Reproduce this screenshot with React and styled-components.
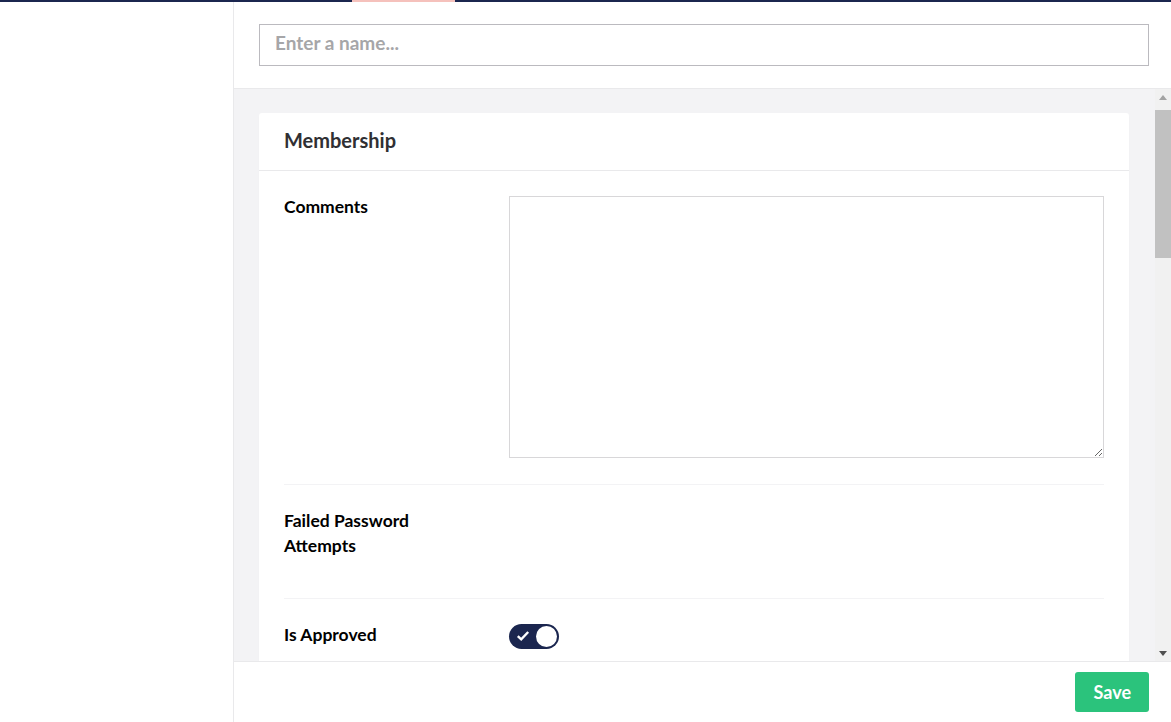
import styled, { createGlobalStyle } from 'styled-components'

const GlobalStyle = createGlobalStyle`
  html, body {
    margin: 0;
    padding: 0;
    height: 100%;
    overflow: hidden;
  }
  body {
    font-family: Lato, "Open Sans", sans-serif;
    color: #000;
    background: #fff;
  }
  * {
    box-sizing: border-box;
  }
`

const Page = styled.div`
  display: flex;
  flex-direction: column;
  height: 100vh;
`

const TopBar = styled.div`
  display: flex;
  height: 2px;
  flex-shrink: 0;
  background: #1b264f;
`

const TabIndicator = styled.div`
  margin-left: 352px;
  width: 103px;
  background: #f5c1bc;
`

const Body = styled.div`
  display: flex;
  flex: 1;
  min-height: 0;
`

const Sidebar = styled.aside`
  width: 234px;
  flex-shrink: 0;
  border-right: 1px solid #e9e9eb;
  background: #fff;
`

const Main = styled.main`
  display: flex;
  flex: 1;
  flex-direction: column;
  min-width: 0;
`

const Header = styled.header`
  flex-shrink: 0;
  padding: 22px 22px 22px 25px;
  border-bottom: 1px solid #e9e9eb;
  background: #fff;
`

const NameInput = styled.input`
  display: block;
  width: 100%;
  height: 42px;
  padding: 0 15px 5px;
  border: 1px solid #bbbabf;
  border-radius: 0;
  font-family: inherit;
  font-size: 19px;
  font-weight: 700;
  color: #1b264f;
  outline: none;
  caret-color: #000;

  &::placeholder {
    color: #a6a6a8;
  }
`

const Content = styled.div`
  display: flex;
  flex: 1;
  min-height: 0;
  background: #f3f3f5;
`

const ScrollArea = styled.div`
  flex: 1;
  min-width: 0;
  overflow: hidden;
  padding: 24px 26px 24px 25px;
`

const ScrollTrack = styled.div`
  display: flex;
  flex-direction: column;
  width: 16px;
  flex-shrink: 0;
  background: #f1f1f1;
`

const ScrollButton = styled.div`
  display: flex;
  align-items: center;
  justify-content: center;
  height: 16px;
  flex-shrink: 0;
  margin-top: ${(p) => (p.$down ? 'auto' : '0')};

  &::before {
    content: '';
    width: 0;
    height: 0;
    border-left: 4.5px solid transparent;
    border-right: 4.5px solid transparent;
    ${(p) =>
      p.$down
        ? 'border-top: 5px solid #505050;'
        : 'border-bottom: 5px solid #a3a3a3;'}
  }
`

const ScrollThumb = styled.div`
  height: 148px;
  margin-top: 5px;
  background: #c1c1c1;
`

const Card = styled.section`
  background: #fff;
  border-radius: 3px;
  box-shadow: 0 1px 1px rgba(0, 0, 0, 0.04);
  margin-bottom: ${(p) => (p.$last ? '0' : '20px')};
`

const CardHeader = styled.div`
  display: flex;
  align-items: center;
  height: 58px;
  padding: 0 25px 3px;
  border-bottom: 1px solid #e9e9eb;
`

const CardTitle = styled.h2`
  margin: 0;
  font-size: 20px;
  font-weight: 700;
  color: #303033;
`

const CardBody = styled.div`
  padding: 0 25px;
`

const Row = styled.div`
  display: grid;
  grid-template-columns: 225px 1fr;
  padding: 25px 0 26px;
  border-bottom: ${(p) => (p.$last ? 'none' : '1px solid #f3f3f5')};
`

const Label = styled.div`
  margin-top: -2px;
  font-size: 17.5px;
  font-weight: 700;
  line-height: 25px;
  color: #000;
`

const Field = styled.div`
  min-height: ${(p) => p.$minHeight || '0'};
  font-size: 15px;
  line-height: 24px;
  color: #1b264f;
`

const TextArea = styled.textarea`
  display: block;
  width: 100%;
  height: 262px;
  border: 1px solid #d8d7d9;
  border-radius: 0;
  font-family: inherit;
  font-size: 15px;
  resize: vertical;
  outline: none;
`

const Toggle = styled.button`
  position: relative;
  display: flex;
  align-items: center;
  justify-content: ${(p) => (p.$on ? 'flex-end' : 'flex-start')};
  width: 50px;
  height: 25px;
  padding: 0 2px;
  border: none;
  border-radius: 13px;
  background: ${(p) => (p.$on ? '#1b264f' : '#bbbabf')};
  cursor: pointer;
`

const ToggleCheck = styled.svg`
  position: absolute;
  left: 7px;
  top: 6px;
`

const Knob = styled.span`
  width: 21px;
  height: 21px;
  border-radius: 50%;
  background: #fff;
`

const Footer = styled.footer`
  display: flex;
  flex-shrink: 0;
  justify-content: flex-end;
  align-items: flex-start;
  height: 61px;
  padding: 10px 22px 0;
  border-top: 1px solid #e9e9eb;
  background: #fff;
`

const SaveButton = styled.button`
  height: 40px;
  padding: 0 18px;
  border: none;
  border-radius: 3px;
  background: #2bc37c;
  font-family: inherit;
  font-size: 18px;
  font-weight: 700;
  color: #fff;
  cursor: pointer;
`

function Switch({ on }) {
  return (
    <Toggle $on={on} type="button" aria-pressed={on}>
      {on ? (
        <ToggleCheck width="14" height="12" viewBox="0 0 14 12">
          <path d="M1.8 6.2 L5.2 9.4 L12.2 2" fill="none" stroke="#fff" strokeWidth="2.4" />
        </ToggleCheck>
      ) : null}
      <Knob />
    </Toggle>
  )
}

const membershipRows = [
  { label: 'Is Locked Out', value: <Switch on={false} /> },
  { label: 'Last Lockout Date', value: '' },
  { label: 'Last Login Date', value: '' },
  { label: 'Last Password Change Date', value: '' },
]

const propertyRows = [
  { label: 'Login', value: '' },
  { label: 'Email', value: '' },
  { label: 'Password', value: '' },
  { label: 'Member Group', value: '' },
  { label: 'Id', value: '' },
  { label: 'Key', value: '' },
]

function App() {
  return (
    <>
      <GlobalStyle />
      <Page>
        <TopBar>
          <TabIndicator />
        </TopBar>
        <Body>
          <Sidebar />
          <Main>
            <Header>
              <NameInput placeholder="Enter a name..." autoFocus />
            </Header>

            <Content>
              <ScrollArea>
                <Card>
                  <CardHeader>
                    <CardTitle>Membership</CardTitle>
                  </CardHeader>
                  <CardBody>
                    <Row>
                      <Label>Comments</Label>
                      <Field>
                        <TextArea />
                      </Field>
                    </Row>
                    <Row>
                      <Label>
                        Failed Password
                        <br />
                        Attempts
                      </Label>
                      <Field $minHeight="62px" />
                    </Row>
                    <Row>
                      <Label>Is Approved</Label>
                      <Field>
                        <Switch on />
                      </Field>
                    </Row>
                    {membershipRows.map((row, index) => (
                      <Row key={row.label} $last={index === membershipRows.length - 1}>
                        <Label>{row.label}</Label>
                        <Field $minHeight="40px">{row.value}</Field>
                      </Row>
                    ))}
                  </CardBody>
                </Card>

                <Card $last>
                  <CardHeader>
                    <CardTitle>Properties</CardTitle>
                  </CardHeader>
                  <CardBody>
                    {propertyRows.map((row, index) => (
                      <Row key={row.label} $last={index === propertyRows.length - 1}>
                        <Label>{row.label}</Label>
                        <Field $minHeight="40px">{row.value}</Field>
                      </Row>
                    ))}
                  </CardBody>
                </Card>
              </ScrollArea>

              <ScrollTrack>
                <ScrollButton />
                <ScrollThumb />
                <ScrollButton $down />
              </ScrollTrack>
            </Content>

            <Footer>
              <SaveButton type="button">Save</SaveButton>
            </Footer>
          </Main>
        </Body>
      </Page>
    </>
  )
}

export default App
